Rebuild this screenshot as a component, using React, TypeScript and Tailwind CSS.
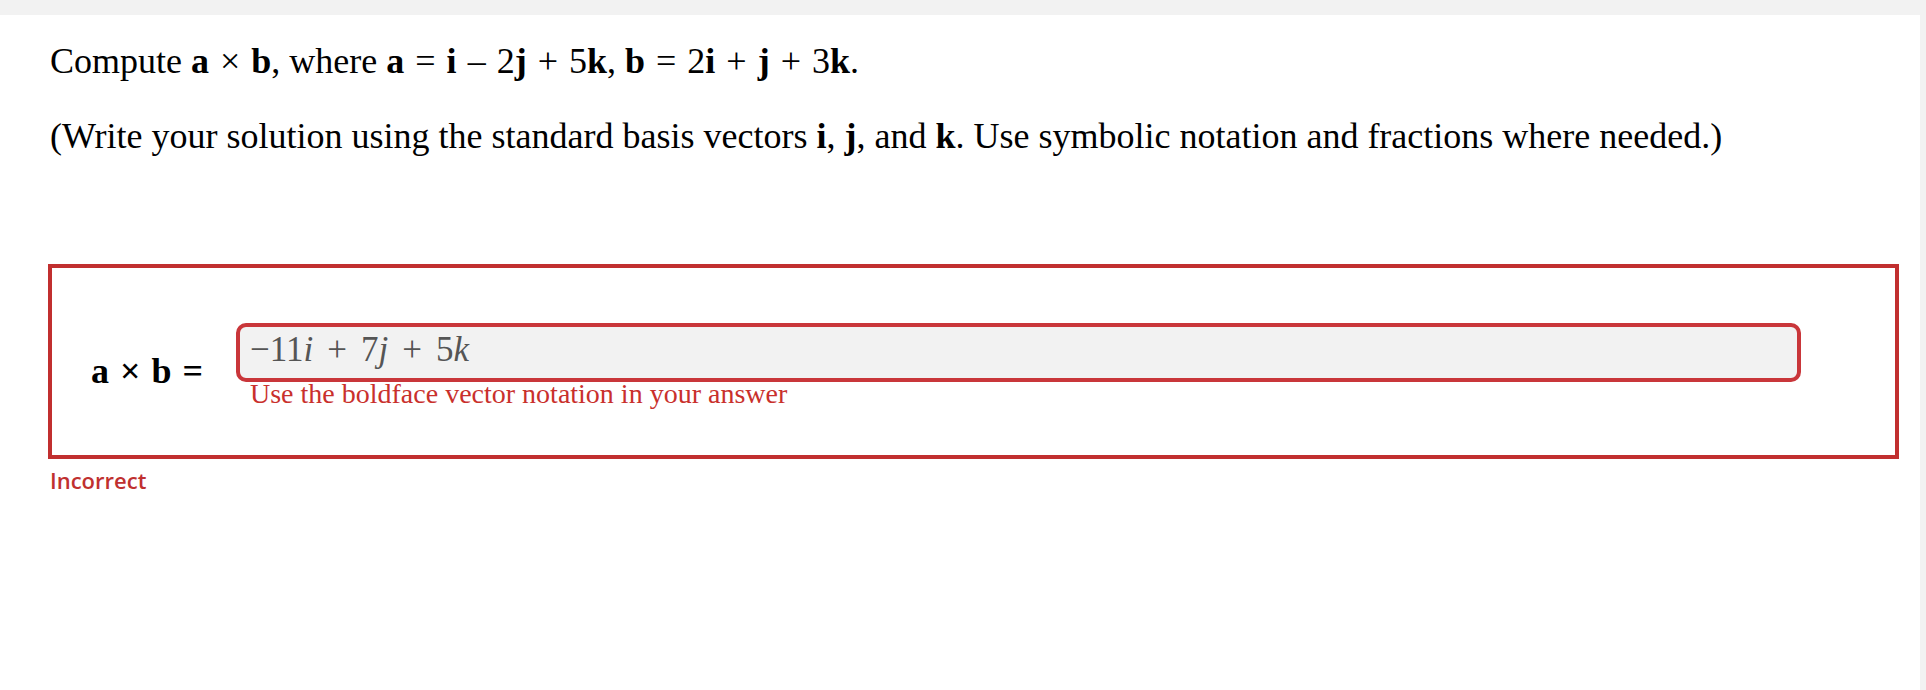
const serif = "font-['Liberation_Serif','Times_New_Roman',serif]";

function B({ children }: { children: React.ReactNode }) {
  return <span className="font-bold">{children}</span>;
}

// operator with a touch of extra math spacing
function Op({ children }: { children: React.ReactNode }) {
  return <span className="mx-[2px]">{children}</span>;
}

function MathInput() {
  return (
    <div className="flex items-center h-[59px] pl-[10px] pb-[5px] rounded-[10px] border-4 border-[#c9363a] bg-[#f2f2f2] text-[35px] leading-[36px] text-[#555]">
      <span>−11</span>
      <span className="italic">i</span>
      <span className="mx-[14px]">+</span>
      <span>7</span>
      <span className="italic">j</span>
      <span className="mx-[14px]">+</span>
      <span>5</span>
      <span className="italic">k</span>
    </div>
  );
}

export default function App() {
  return (
    <div className="min-h-screen bg-[#f2f2f2] pt-[15px] pr-[6px]">
      <div className={`h-[675px] bg-white pt-[26px] pl-[48px] pr-[21px] text-black ${serif}`}>
        <p className="ml-[2px] text-[36px] leading-[40px]">
          Compute <B>a</B> <Op>×</Op> <B>b</B>, where <B>a</B> <Op>=</Op> <B>i</B> <Op>–</Op> 2<B>j</B> <Op>+</Op> 5<B>k</B>,{" "}
          <B>b</B> <Op>=</Op> 2<B>i</B> <Op>+</Op> <B>j</B> <Op>+</Op> 3<B>k</B>.
        </p>
        <p className="ml-[2px] mt-[35px] text-[36px] leading-[40px]">
          (Write your solution using the standard basis vectors <B>i</B>, <B>j</B>, and <B>k</B>. Use symbolic notation and fractions where needed.)
        </p>

        <div className="mt-[108px] flex items-start border-4 border-[#c12f2f] pt-[55px] pb-[51px] pl-[39px] pr-[94px]">
          <div className="w-[145px] shrink-0 mt-[28px] text-[36px] leading-[40px] font-bold">
            a <Op>×</Op> b <Op>=</Op>
          </div>
          <div className="flex-1">
            <MathInput />
            <div className="mt-[2px] pl-[14px] text-[28px] leading-[20px] text-[#c9302c]">
              Use the boldface vector notation in your answer
            </div>
          </div>
        </div>

        <div className="mt-[6px] ml-[2px] font-['Open_Sans',sans-serif] font-semibold text-[22px] leading-[30px] text-[#c0302f]">
          Incorrect
        </div>
      </div>
    </div>
  );
}
